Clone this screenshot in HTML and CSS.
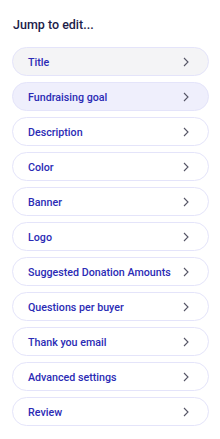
FILE: index.html
```html
<!DOCTYPE html>
<html lang="en">
<head>
    <meta charset="UTF-8">
    <meta name="viewport" content="width=device-width, initial-scale=1.0">
    <title>Jump to edit</title>
    <link rel="stylesheet" href="styles.css">
</head>
<body>
    <h2 class="jump-title">Jump to edit...</h2>
    <nav class="jump-list">
        <a class="jump-item is-visited" href="#title"><span>Title</span><svg class="chevron" viewBox="0 0 6 10"><polyline points="1,1 5,5 1,9"/></svg></a>
        <a class="jump-item is-current" href="#goal"><span>Fundraising goal</span><svg class="chevron" viewBox="0 0 6 10"><polyline points="1,1 5,5 1,9"/></svg></a>
        <a class="jump-item" href="#description"><span>Description</span><svg class="chevron" viewBox="0 0 6 10"><polyline points="1,1 5,5 1,9"/></svg></a>
        <a class="jump-item" href="#color"><span>Color</span><svg class="chevron" viewBox="0 0 6 10"><polyline points="1,1 5,5 1,9"/></svg></a>
        <a class="jump-item" href="#banner"><span>Banner</span><svg class="chevron" viewBox="0 0 6 10"><polyline points="1,1 5,5 1,9"/></svg></a>
        <a class="jump-item" href="#logo"><span>Logo</span><svg class="chevron" viewBox="0 0 6 10"><polyline points="1,1 5,5 1,9"/></svg></a>
        <a class="jump-item" href="#amounts"><span>Suggested Donation Amounts</span><svg class="chevron" viewBox="0 0 6 10"><polyline points="1,1 5,5 1,9"/></svg></a>
        <a class="jump-item" href="#questions"><span>Questions per buyer</span><svg class="chevron" viewBox="0 0 6 10"><polyline points="1,1 5,5 1,9"/></svg></a>
        <a class="jump-item" href="#email"><span>Thank you email</span><svg class="chevron" viewBox="0 0 6 10"><polyline points="1,1 5,5 1,9"/></svg></a>
        <a class="jump-item" href="#advanced"><span>Advanced settings</span><svg class="chevron" viewBox="0 0 6 10"><polyline points="1,1 5,5 1,9"/></svg></a>
        <a class="jump-item" href="#review"><span>Review</span><svg class="chevron" viewBox="0 0 6 10"><polyline points="1,1 5,5 1,9"/></svg></a>
    </nav>
</body>
</html>
```

FILE: styles.css
```css
body {
    font-family: Roboto, "Noto Sans", sans-serif;
    margin: 0;
    padding: 17px 11px 0 12px;
    background-color: #ffffff;
}
.jump-title {
    margin: 0 0 14px 1px;
    font-size: 12.5px;
    line-height: 16px;
    font-weight: 500;
    color: #1c1c4a;
}
.jump-list {
    display: flex;
    flex-direction: column;
    gap: 6px;
}
.jump-item {
    display: flex;
    align-items: center;
    justify-content: space-between;
    height: 29px;
    box-sizing: border-box;
    padding: 0 19px 0 15px;
    border: 1px solid #e4e4fa;
    border-radius: 15px;
    background: #ffffff;
    color: #2b2bb5;
    font-size: 10.7px;
    font-weight: 500;
    text-decoration: none;
}
.jump-item span {
    padding-top: 1px;
}
.jump-item.is-visited {
    background: #f4f4f6;
}
.jump-item.is-current {
    background: #efeffc;
}
.chevron {
    width: 6px;
    height: 10px;
    fill: none;
    stroke: #555566;
    stroke-width: 1.1;
}
```
